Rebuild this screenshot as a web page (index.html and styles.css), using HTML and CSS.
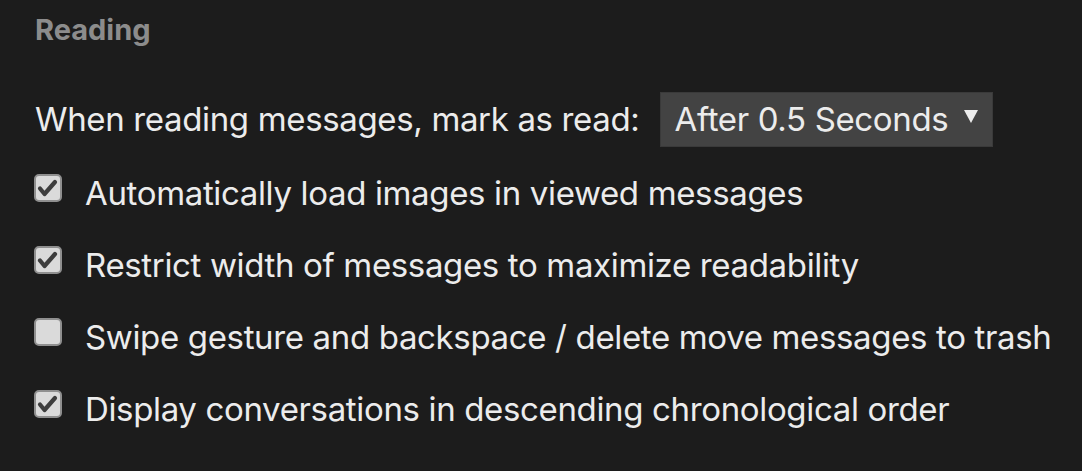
FILE: index.html
```html
<!DOCTYPE html>
<html>
<head>
<meta charset="utf-8">
<link rel="stylesheet" href="styles.css">
</head>
<body>
<section class="section">
  <h2 class="title">Reading</h2>
  <div class="row select-row">
    <span class="label">When reading messages, mark as read:</span>
    <div class="select"><span>After 0.5 Seconds</span><svg class="arrow" viewBox="0 0 14 13" width="14" height="13"><polygon points="0,0 14,0 7,13" fill="#ececec"/></svg></div>
  </div>
  <div class="row check-row">
    <span class="box checked"><svg viewBox="0 0 28 28" width="28" height="28"><path d="M6 14.5 L10.5 20 L21 8" fill="none" stroke="#3d3d3d" stroke-width="4.2" stroke-linecap="round" stroke-linejoin="round"/></svg></span>
    <span class="label">Automatically load images in viewed messages</span>
  </div>
  <div class="row check-row">
    <span class="box checked"><svg viewBox="0 0 28 28" width="28" height="28"><path d="M6 14.5 L10.5 20 L21 8" fill="none" stroke="#3d3d3d" stroke-width="4.2" stroke-linecap="round" stroke-linejoin="round"/></svg></span>
    <span class="label">Restrict width of messages to maximize readability</span>
  </div>
  <div class="row check-row">
    <span class="box"></span>
    <span class="label">Swipe gesture and backspace / delete move messages to trash</span>
  </div>
  <div class="row check-row">
    <span class="box checked"><svg viewBox="0 0 28 28" width="28" height="28"><path d="M6 14.5 L10.5 20 L21 8" fill="none" stroke="#3d3d3d" stroke-width="4.2" stroke-linecap="round" stroke-linejoin="round"/></svg></span>
    <span class="label">Display conversations in descending chronological order</span>
  </div>
</section>
</body>
</html>
```
FILE: styles.css
```css
html, body {
  margin: 0;
  padding: 0;
  background: #1c1c1c;
  width: 1082px;
  height: 471px;
  overflow: hidden;
}
.section {
  padding: 0 0 0 34px;
  font-family: Inter, "Liberation Sans", sans-serif;
  color: #ececec;
}
.title {
  margin: 0;
  padding-left: 1px;
  font-size: 29px;
  font-weight: 700;
  color: #8c8c8c;
  line-height: 28px;
  height: 60px;
  padding-top: 16px;
  box-sizing: border-box;
}
.row {
  display: flex;
  align-items: center;
  font-size: 33px;
  font-weight: 380;
  letter-spacing: -0.35px;
  height: 72px;
}
.select-row {
  margin-top: 30px;
  height: 58px;
  padding-left: 1px;
}
.select {
  margin-left: 20px;
  height: 55px;
  display: flex;
  align-items: center;
  padding: 0 14px;
  background: #434343;
  border: 1px solid #3a3a3a;
  box-sizing: border-box;
}
.arrow {
  margin-left: 16px;
  margin-top: -6px;
  flex: none;
}
.check-row {
  height: 72px;
}
.select-row + .check-row {
  margin-top: 9px;
}
.box {
  width: 28px;
  height: 28px;
  box-sizing: border-box;
  border: 2px solid #8f8f8f;
  border-radius: 5px;
  background: #dadada;
  margin-right: 23px;
  margin-top: -10px;
  position: relative;
  flex: none;
}
.box svg {
  position: absolute;
  left: -2px;
  top: -2px;
}
```
